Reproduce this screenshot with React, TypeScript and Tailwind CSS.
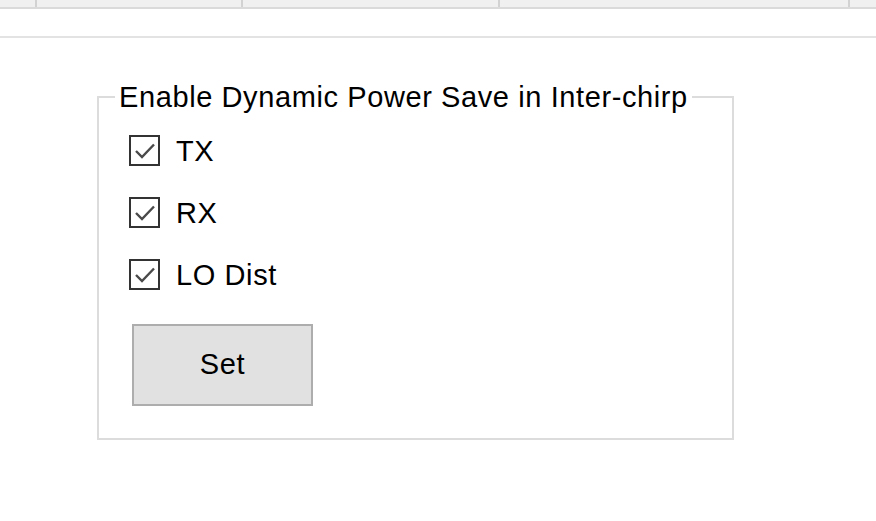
import React from 'react';

const Check = () => (
  <span className="flex h-[31px] w-[31px] items-center justify-center border-2 border-[#333333] bg-white">
    <svg width="24" height="24" viewBox="0 0 24 24">
      <path d="M3 12 L9 18 L21 5.5" fill="none" stroke="#4a4a4a" strokeWidth="2.4" />
    </svg>
  </span>
);

const Row = ({ label }: { label: string }) => (
  <label className="flex h-[31px] items-center gap-[16px]">
    <Check />
    <span className="text-[29px] leading-[30px] tracking-[0.6px] text-black">{label}</span>
  </label>
);

export default function App() {
  const cols = [37, 206, 257, 350];
  return (
    <div className="h-[521px] w-[876px] overflow-hidden bg-white" style={{ fontFamily: '"Liberation Sans", Arial, sans-serif' }}>
      <div className="flex h-[9px] border-b-2 border-[#dadada] bg-[#f0f0f0]">
        {cols.map((w, i) => (
          <div key={i} className="shrink-0 border-r-2 border-[#d2d2d2]" style={{ width: w }} />
        ))}
      </div>
      <div className="h-[27px]" />
      <div className="h-[2px] bg-[#e3e3e3]" />
      <fieldset className="ml-[97px] mt-[44px] w-[637px] border-2 border-[#dcdcdc] pb-[32px] pl-[30px] pt-[23px]">
        <legend className="ml-[-14px] px-[4px] text-[29px] leading-[30px] tracking-[0.6px] text-black">
          Enable Dynamic Power Save in Inter-chirp
        </legend>
        <div className="flex flex-col gap-[31px]">
          <Row label="TX" />
          <Row label="RX" />
          <Row label="LO Dist" />
        </div>
        <button className="ml-[3px] mt-[34px] flex h-[82px] w-[181px] items-center justify-center border-2 border-[#adadad] bg-[#e1e1e1] text-[29px] tracking-[0.6px] text-black">
          Set
        </button>
      </fieldset>
    </div>
  );
}
